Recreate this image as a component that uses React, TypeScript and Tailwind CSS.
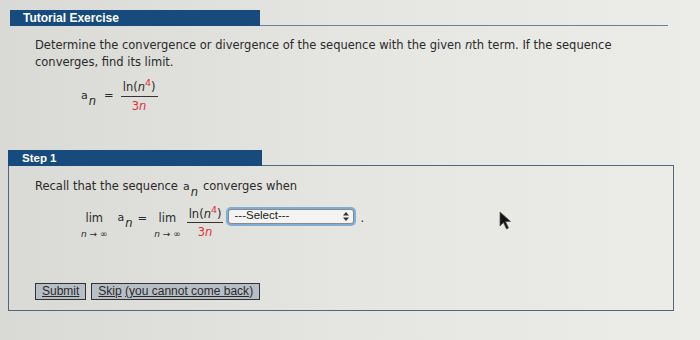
import React from 'react';

function Lim() {
  return (
    <span className="inline-flex flex-col items-center leading-none">
      <span className="text-[11.5px] leading-none">lim</span>
      <span className="text-[9px] leading-none mt-[6px] whitespace-nowrap">
        <i>n</i> → ∞
      </span>
    </span>
  );
}

function Frac() {
  return (
    <span className="inline-flex flex-col items-center leading-none">
      <span className="text-[11.5px] leading-none px-[2px] pb-[2px] border-b border-[#333]">
        ln(<i>n</i>
        <span className="relative -top-[5px] text-[#d33] text-[9.5px]">4</span>)
      </span>
      <span className="text-[11.5px] leading-none pt-[4px] text-[#d33]">
        3<i>n</i>
      </span>
    </span>
  );
}

function An() {
  return (
    <span className="inline-flex items-start leading-none">
      <span className="text-[11px] leading-none">a</span>
      <i className="text-[11.5px] leading-none mt-[6px] ml-[1px]">n</i>
    </span>
  );
}

export default function App() {
  return (
    <div
      className="relative w-[700px] h-[340px] overflow-hidden bg-gradient-to-r from-[#d9d9d5] via-[#e5e5e1] to-[#ecece9] text-[#2a2a2a] pt-[10px] pl-[10px]"
      style={{ fontFamily: '"DejaVu Sans", Verdana, sans-serif' }}
    >
      {/* header */}
      <div className="flex items-end w-[658px]">
        <div
          className="w-[250px] h-[16px] bg-[#174b7d] text-white text-[12px] font-bold leading-[16px] pl-[13px]"
          style={{ fontFamily: '"Liberation Sans", Arial, sans-serif' }}
        >
          Tutorial Exercise
        </div>
        <div className="flex-1 border-b border-[#6d809a]" />
      </div>

      <div className="pl-[25px] pt-[11px] text-[11.5px] leading-[17px]">
        <p>
          Determine the convergence or divergence of the sequence with the given <i>n</i>th term. If the sequence
        </p>
        <p>converges, find its limit.</p>
      </div>

      <div className="flex items-start pl-[71px] mt-[11px]">
        <span className="flex mt-[8px]">
          <An />
        </span>
        <span className="flex mt-[8px] ml-[8px] text-[11.5px] leading-none">=</span>
        <span className="flex ml-[7px]">
          <Frac />
        </span>
      </div>

      {/* step 1 */}
      <div className="mt-[38px] w-[666px] -ml-[2px]">
        <div className="flex items-end">
          <div
            className="w-[254px] h-[16px] bg-[#174b7d] text-white text-[11.5px] font-bold leading-[16px] pl-[14px]"
            style={{ fontFamily: '"Liberation Sans", Arial, sans-serif' }}
          >
            Step 1
          </div>
          <div className="flex-1 border-b border-[#56667a]" />
        </div>
        <div className="border-l border-r border-b border-[#56667a] h-[145px] pl-[26px] pt-[15px]">
          <div className="flex items-start text-[11.5px] leading-none gap-[5px]">
            <span>Recall that the sequence</span>
            <An />
            <span>converges when</span>
          </div>
          <div className="flex items-start mt-[14px] pl-[46px]">
            <span className="flex">
              <Lim />
            </span>
            <span className="flex ml-[10px] -mt-[1px]">
              <An />
            </span>
            <span className="flex text-[11.5px] leading-none ml-[5px]">=</span>
            <span className="flex ml-[7px]">
              <Lim />
            </span>
            <span className="flex ml-[6px] -mt-[4px]">
              <Frac />
            </span>
            <div className="ml-[3px] -mt-[6px] rounded-[5px] p-[2px] bg-[#80acd8]">
              <div
                className="w-[126px] h-[15px] rounded-[3px] border border-[#8a8a8a] bg-[#f3f3f2] flex items-center justify-between pl-[5px] pr-[4px] text-[11.5px] text-[#222]"
                style={{ fontFamily: '"Liberation Sans", Arial, sans-serif' }}
              >
                <span>---Select---</span>
                <svg width="6" height="9" viewBox="0 0 6 9">
                  <path d="M3 0 L6 3.5 H0 Z M3 9 L6 5.5 H0 Z" fill="#333" />
                </svg>
              </div>
            </div>
            <span className="flex ml-[4px] text-[11.5px] leading-none">.</span>
          </div>
          <div
            className="flex gap-[5px] mt-[44px] text-[12px]"
            style={{ fontFamily: '"Liberation Sans", Arial, sans-serif' }}
          >
            <button className="h-[17px] px-[6px] bg-[#b7bec6] border border-[#333] leading-[15px] underline">
              Submit
            </button>
            <button className="h-[17px] px-[6px] bg-[#b7bec6] border border-[#333] leading-[15px]">
              <span className="underline">Skip</span> <span className="underline">(you cannot come back</span>)
            </button>
          </div>
        </div>
      </div>

      {/* mouse cursor */}
      <svg className="absolute left-[499px] top-[211px]" width="14" height="20" viewBox="0 0 14 20">
        <path d="M1 1 L1 15 L4.5 11.5 L7.5 18 L9.5 17 L6.5 10.5 L11.5 10.5 Z" fill="#111" stroke="#555" strokeWidth="0.8" />
      </svg>
    </div>
  );
}
